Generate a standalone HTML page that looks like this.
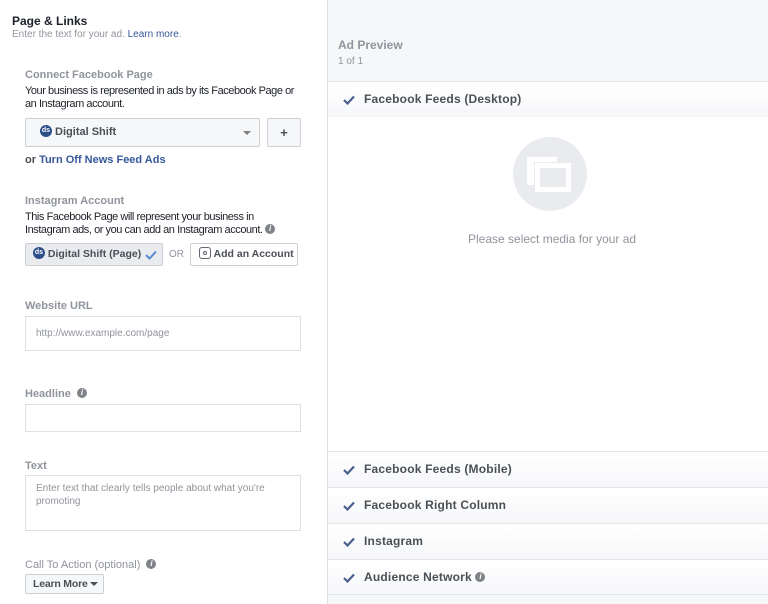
<!DOCTYPE html>
<html><head><meta charset="utf-8"><style>
*{box-sizing:border-box;margin:0;padding:0}
body{width:768px;height:604px;overflow:hidden;background:#fff;font-family:"Liberation Sans",Arial,sans-serif;position:relative;color:#1d2129}
.a{position:absolute;white-space:nowrap}
.lbl{color:#90949c;font-weight:bold;font-size:11px}
.txt{font-size:11px;color:#1d2129;line-height:13px;letter-spacing:-0.45px}
.box{border:1px solid #dddfe2;background:#fff}
.btn{border:1px solid #ccd0d5;background:#f6f7f9;border-radius:2px}
.ds{display:inline-block;width:12px;height:12px;border-radius:50%;background:#2c4f8a;color:#fff;font-size:7px;line-height:12px;text-align:center;font-weight:bold;vertical-align:middle;position:relative;top:-1px;letter-spacing:0}
.info{display:inline-block;width:10px;height:10px;border-radius:50%;background:#7f8389;color:#fff;font-size:8px;line-height:10px;text-align:center;font-weight:bold;font-style:italic;vertical-align:middle;position:relative;top:-1px;letter-spacing:0}
.row{position:absolute;left:328px;width:440px;height:36px;border-top:1px solid #e5e6e9;background:linear-gradient(#fff,#f6f7f9);font-size:12px;font-weight:bold;color:#4b4f56;line-height:35px;padding-left:36px;letter-spacing:.2px}
.row svg{position:absolute;left:15px;top:13px}
</style></head><body>
<div class="a" style="left:12px;top:14px;font-size:12px;font-weight:bold;color:#1d2129">Page &amp; Links</div>
<div class="a" style="left:12px;top:29px;font-size:10px;color:#90949c">Enter the text for your ad. <span style="color:#365899">Learn more</span>.</div>

<div class="a lbl" style="left:25px;top:69px">Connect Facebook Page</div>
<div class="a txt" style="left:25px;top:85px">Your business is represented in ads by its Facebook Page or<br>an Instagram account.</div>
<div class="a btn" style="left:25px;top:118px;width:235px;height:29px;font-size:11px;font-weight:bold;color:#4b4f56;line-height:27px;padding-left:14px"><span class="ds">ds</span> Digital Shift<span class="a" style="right:8px;top:12px;border:4px solid transparent;border-top:4px solid #7f7f7f;border-bottom:0"></span></div>
<div class="a btn" style="left:267px;top:118px;width:34px;height:29px;text-align:center;line-height:27px;font-weight:bold;color:#4b4f56;font-size:13px">+</div>
<div class="a" style="left:25px;top:154px;font-size:11px;font-weight:bold;color:#4b4f56">or <span style="color:#365899">Turn Off News Feed Ads</span></div>

<div class="a lbl" style="left:25px;top:195px">Instagram Account</div>
<div class="a txt" style="left:25px;top:211px">This Facebook Page will represent your business in<br>Instagram ads, or you can add an Instagram account. <span class="info">i</span></div>
<div class="a btn" style="left:25px;top:243px;width:138px;height:23px;background:#e9ebee;font-size:10.5px;font-weight:bold;color:#4b4f56;line-height:21px;padding-left:7px"><span class="ds">ds</span> Digital Shift (Page)<svg style="position:absolute;left:119px;top:6px" width="12" height="10" viewBox="0 0 12 10"><path d="M1 5l3.5 3.5L11 1.5" fill="none" stroke="#5b8ad6" stroke-width="2"/></svg></div>
<div class="a" style="left:169px;top:249px;font-size:10px;color:#90949c">OR</div>
<div class="a btn" style="left:190px;top:243px;width:108px;height:23px;background:#fff;font-size:10.5px;font-weight:bold;color:#4b4f56;line-height:21px;padding-left:8px"><span style="display:inline-block;width:12px;height:12px;border:1.3px solid #606770;border-radius:3px;vertical-align:middle;position:relative;top:-1px"><span style="position:absolute;left:2.5px;top:2.5px;width:4.5px;height:4.5px;border:1.2px solid #606770;border-radius:50%"></span></span> Add an Account</div>

<div class="a lbl" style="left:25px;top:300px">Website URL</div>
<div class="a box" style="left:25px;top:316px;width:276px;height:35px;font-size:10px;color:#90949c;line-height:33px;padding-left:10px">http://www.example.com/page</div>

<div class="a lbl" style="left:25px;top:388px">Headline &nbsp;<span class="info">i</span></div>
<div class="a box" style="left:25px;top:404px;width:276px;height:28px"></div>

<div class="a lbl" style="left:25px;top:460px">Text</div>
<div class="a box" style="left:25px;top:475px;width:276px;height:56px;font-size:10px;color:#90949c;line-height:13px;padding:6px 10px;white-space:normal">Enter text that clearly tells people about what you're promoting</div>

<div class="a lbl" style="left:25px;top:559px;font-weight:normal">Call To Action (optional) &nbsp;<span class="info">i</span></div>
<div class="a btn" style="left:25px;top:574px;width:79px;height:20px;font-size:10.5px;font-weight:bold;color:#4b4f56;line-height:18px;padding-left:7px;letter-spacing:-0.2px">Learn More <span style="display:inline-block;border:4px solid transparent;border-top:4px solid #4b4f56;border-bottom:0;vertical-align:middle"></span></div>

<div class="a" style="left:327px;top:0;width:441px;height:604px;background:#f6f7f9;border-left:1px solid #dddfe2"></div>
<div class="a" style="left:338px;top:38px;font-size:12px;font-weight:bold;color:#90949c">Ad Preview</div>
<div class="a" style="left:338px;top:56px;font-size:10px;color:#90949c">1 of 1</div>
<div class="a" style="left:328px;top:116px;width:440px;height:335px;background:#fff;border-top:1px solid #e5e6e9"></div>
<div class="a" style="left:513px;top:137px;width:74px;height:74px;border-radius:50%;background:#e9ebee"></div>
<div class="a" style="left:527px;top:157px;width:30px;height:28px;background:#fff"></div>
<div class="a" style="left:534px;top:162px;width:38px;height:31px;background:#e9ebee"></div>
<div class="a" style="left:535px;top:163px;width:36px;height:29px;background:#fff"></div>
<div class="a" style="left:540px;top:168px;width:26px;height:19px;background:#e9ebee"></div>
<div class="a" style="left:468px;top:232px;font-size:12px;color:#90949c">Please select media for your ad</div>

<div class="row" style="top:81px"><svg width="12" height="10" viewBox="0 0 12 10"><path d="M1 5l3.5 3.5L11 1.5" fill="none" stroke="#4b5f8f" stroke-width="2.2"/></svg><span style="color:#4b4f56">Facebook Feeds (Desktop)</span></div>
<div class="row" style="top:451px"><svg width="12" height="10" viewBox="0 0 12 10"><path d="M1 5l3.5 3.5L11 1.5" fill="none" stroke="#4b5f8f" stroke-width="2.2"/></svg>Facebook Feeds (Mobile)</div>
<div class="row" style="top:487px"><svg width="12" height="10" viewBox="0 0 12 10"><path d="M1 5l3.5 3.5L11 1.5" fill="none" stroke="#4b5f8f" stroke-width="2.2"/></svg>Facebook Right Column</div>
<div class="row" style="top:523px"><svg width="12" height="10" viewBox="0 0 12 10"><path d="M1 5l3.5 3.5L11 1.5" fill="none" stroke="#4b5f8f" stroke-width="2.2"/></svg>Instagram</div>
<div class="row" style="top:559px;border-bottom:1px solid #e5e6e9"><svg width="12" height="10" viewBox="0 0 12 10"><path d="M1 5l3.5 3.5L11 1.5" fill="none" stroke="#4b5f8f" stroke-width="2.2"/></svg>Audience Network <span class="info">i</span></div>
</body></html>
